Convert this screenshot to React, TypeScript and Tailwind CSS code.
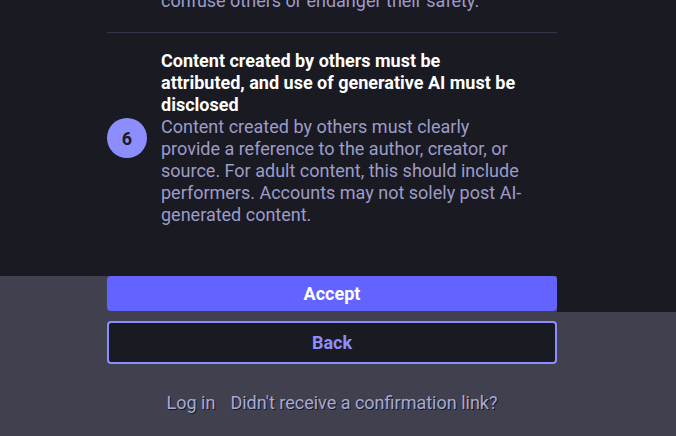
import React from "react";

type Rule = {
  n: number;
  title: string;
  body: string;
};

const rule: Rule = {
  n: 6,
  title:
    "Content created by others must be attributed, and use of generative AI must be disclosed",
  body: "Content created by others must clearly provide a reference to the author, creator, or source. For adult content, this should include performers. Accounts may not solely post AI-generated content.",
};

function RuleItem({ item }: { item: Rule }) {
  return (
    <li className="flex items-center gap-[14px] pt-[17px]">
      <div className="flex h-10 w-10 shrink-0 items-center justify-center rounded-full bg-[#8c8dff] text-[18px] font-bold text-[#191a22]">
        {item.n}
      </div>
      <div className="w-[362px]">
        <p className="text-[18px] font-bold leading-[22px] text-white">{item.title}</p>
        <p className="text-[18px] leading-[22px] text-[#9e9cc8]">{item.body}</p>
      </div>
    </li>
  );
}

export default function App() {
  return (
    <div className="h-[436px] w-[676px] overflow-hidden bg-[#41404f] font-['Roboto',sans-serif]">
      <div className="flow-root h-[276px] bg-[#191a22]">
        <ul className="ml-[107px] w-[450px]">
          <li className="-mt-[10px] border-b border-[#35354a] pb-[20px] pl-[54px]">
            <p className="text-[18px] leading-[22px] text-[#9e9cc8]">
              confuse others or endanger their safety.
            </p>
          </li>
          <RuleItem item={rule} />
        </ul>
      </div>

      <div className="flex">
        <div className="ml-[107px] flex w-[450px] flex-col gap-[10px]">
          <button
            type="button"
            className="h-[35px] w-full rounded-[4px] bg-[#6364ff] text-[18px] font-bold text-white"
          >
            Accept
          </button>
          <button
            type="button"
            className="h-[43px] w-full rounded-[4px] border-2 border-[#8c8dff] bg-[#191a22] text-[18px] font-bold text-[#8c8dff]"
          >
            Back
          </button>
          <div className="mt-[18px] flex justify-center gap-[15px] text-[18px] leading-[22px] text-[#a9a8cf] [text-shadow:1px_1px_0_#17171f]">
            <a>Log in</a>
            <a>Didn't receive a confirmation link?</a>
          </div>
        </div>
        <div className="h-9 flex-1 bg-[#191a22]" />
      </div>
    </div>
  );
}
